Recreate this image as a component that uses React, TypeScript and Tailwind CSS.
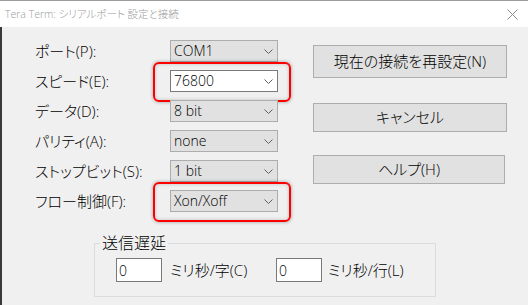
import React from 'react';

const FONT = { fontFamily: '"Open Sans", "Noto Sans CJK JP", sans-serif' };

function Chevron() {
  return (
    <svg width="9" height="5" viewBox="0 0 9 5" className="shrink-0">
      <polyline points="0.5,0.5 4.5,4.5 8.5,0.5" fill="none" stroke="#606060" strokeWidth="1" />
    </svg>
  );
}

interface ComboProps {
  value: string;
  editable?: boolean;
  marked?: boolean;
}

function Combo({ value, editable, marked }: ComboProps) {
  return (
    <div className="relative w-[108px] h-[22px]">
      <div
        className={
          editable
            ? 'w-full h-full flex items-center justify-between pl-[3px] pr-[4px] bg-white border border-[#7a7a7a]'
            : 'w-full h-full flex items-center justify-between pl-[3px] pr-[4px] bg-[#e1e1e1] border border-[#adadad]'
        }
      >
        <span className="text-[14px] text-black leading-none">{value}</span>
        <Chevron />
      </div>
      {marked && (
        <div className="absolute left-[-17px] top-[-8px] w-[138px] h-[40px] rounded-[6px] border-2 border-[#ff0000] shadow-[0_0_3px_1px_rgba(0,0,0,0.22),inset_0_0_3px_1px_rgba(0,0,0,0.12)] pointer-events-none" />
      )}
    </div>
  );
}

const rows = [
  { label: 'ポート(P):', value: 'COM1' },
  { label: 'スピード(E):', value: '76800', editable: true, marked: true },
  { label: 'データ(D):', value: '8 bit' },
  { label: 'パリティ(A):', value: 'none' },
  { label: 'ストップビット(S):', value: '1 bit' },
  { label: 'フロー制御(F):', value: 'Xon/Xoff', marked: true },
];

export default function App() {
  return (
    <div
      className="w-[528px] h-[305px] bg-[#f0f0f0] overflow-hidden text-black font-light [font-feature-settings:'palt']"
      style={FONT}
    >
      {/* Title bar */}
      <div className="h-[27px] bg-white border-t border-[#9c9c9c] flex items-center justify-between pl-[5px] pr-[10px]">
        <span className="text-[10.5px] text-[#9a9a9a] leading-none">Tera Term: シリアルポート 設定と接続</span>
        <svg width="11" height="11" viewBox="0 0 11 11">
          <path d="M0.5 0.5 L10.5 10.5 M10.5 0.5 L0.5 10.5" stroke="#8a8a8a" strokeWidth="1" />
        </svg>
      </div>

      {/* Body */}
      <div className="h-[278px] border-l-2 border-[#3a3a3a]">
        <div className="flex">
          <div className="flex flex-col gap-[8px] pt-[13px] pl-[33px]">
            {rows.map((r) => (
              <div key={r.label} className="flex items-center h-[22px]">
                <span className="w-[135px] text-[15px] leading-none">{r.label}</span>
                <Combo value={r.value} editable={r.editable} marked={r.marked} />
              </div>
            ))}
          </div>

          <div className="flex flex-col ml-[35px] pt-[18px]">
            <button className="w-[194px] h-[33px] bg-[#e1e1e1] border border-[#adadad] text-[15px] leading-none">
              現在の接続を再設定(N)
            </button>
            <button className="w-[194px] h-[29px] mt-[25px] bg-[#e1e1e1] border border-[#adadad] text-[15px] leading-none">
              キャンセル
            </button>
            <button className="w-[192px] h-[29px] mt-[23px] bg-[#e1e1e1] border border-[#adadad] text-[15px] leading-none">
              ヘルプ(H)
            </button>
          </div>
        </div>

        {/* Send delay group */}
        <fieldset className="ml-[92px] mt-[21px] w-[342px] h-[64px] border border-[#dcdcdc]">
          <legend className="ml-[5px] px-[2px] text-[16px] leading-[20px]">送信遅延</legend>
          <div className="flex items-center pl-[21px] pt-[5px]">
            <div className="w-[46px] h-[24px] bg-white border border-[#7a7a7a] flex items-center pl-[2px] text-[14px]">0</div>
            <span className="ml-[8px] w-[106px] text-[15px] leading-none">ミリ秒/字(C)</span>
            <div className="w-[46px] h-[24px] bg-white border border-[#7a7a7a] flex items-center pl-[2px] text-[14px]">0</div>
            <span className="ml-[6px] text-[15px] leading-none">ミリ秒/行(L)</span>
          </div>
        </fieldset>
      </div>
    </div>
  );
}
